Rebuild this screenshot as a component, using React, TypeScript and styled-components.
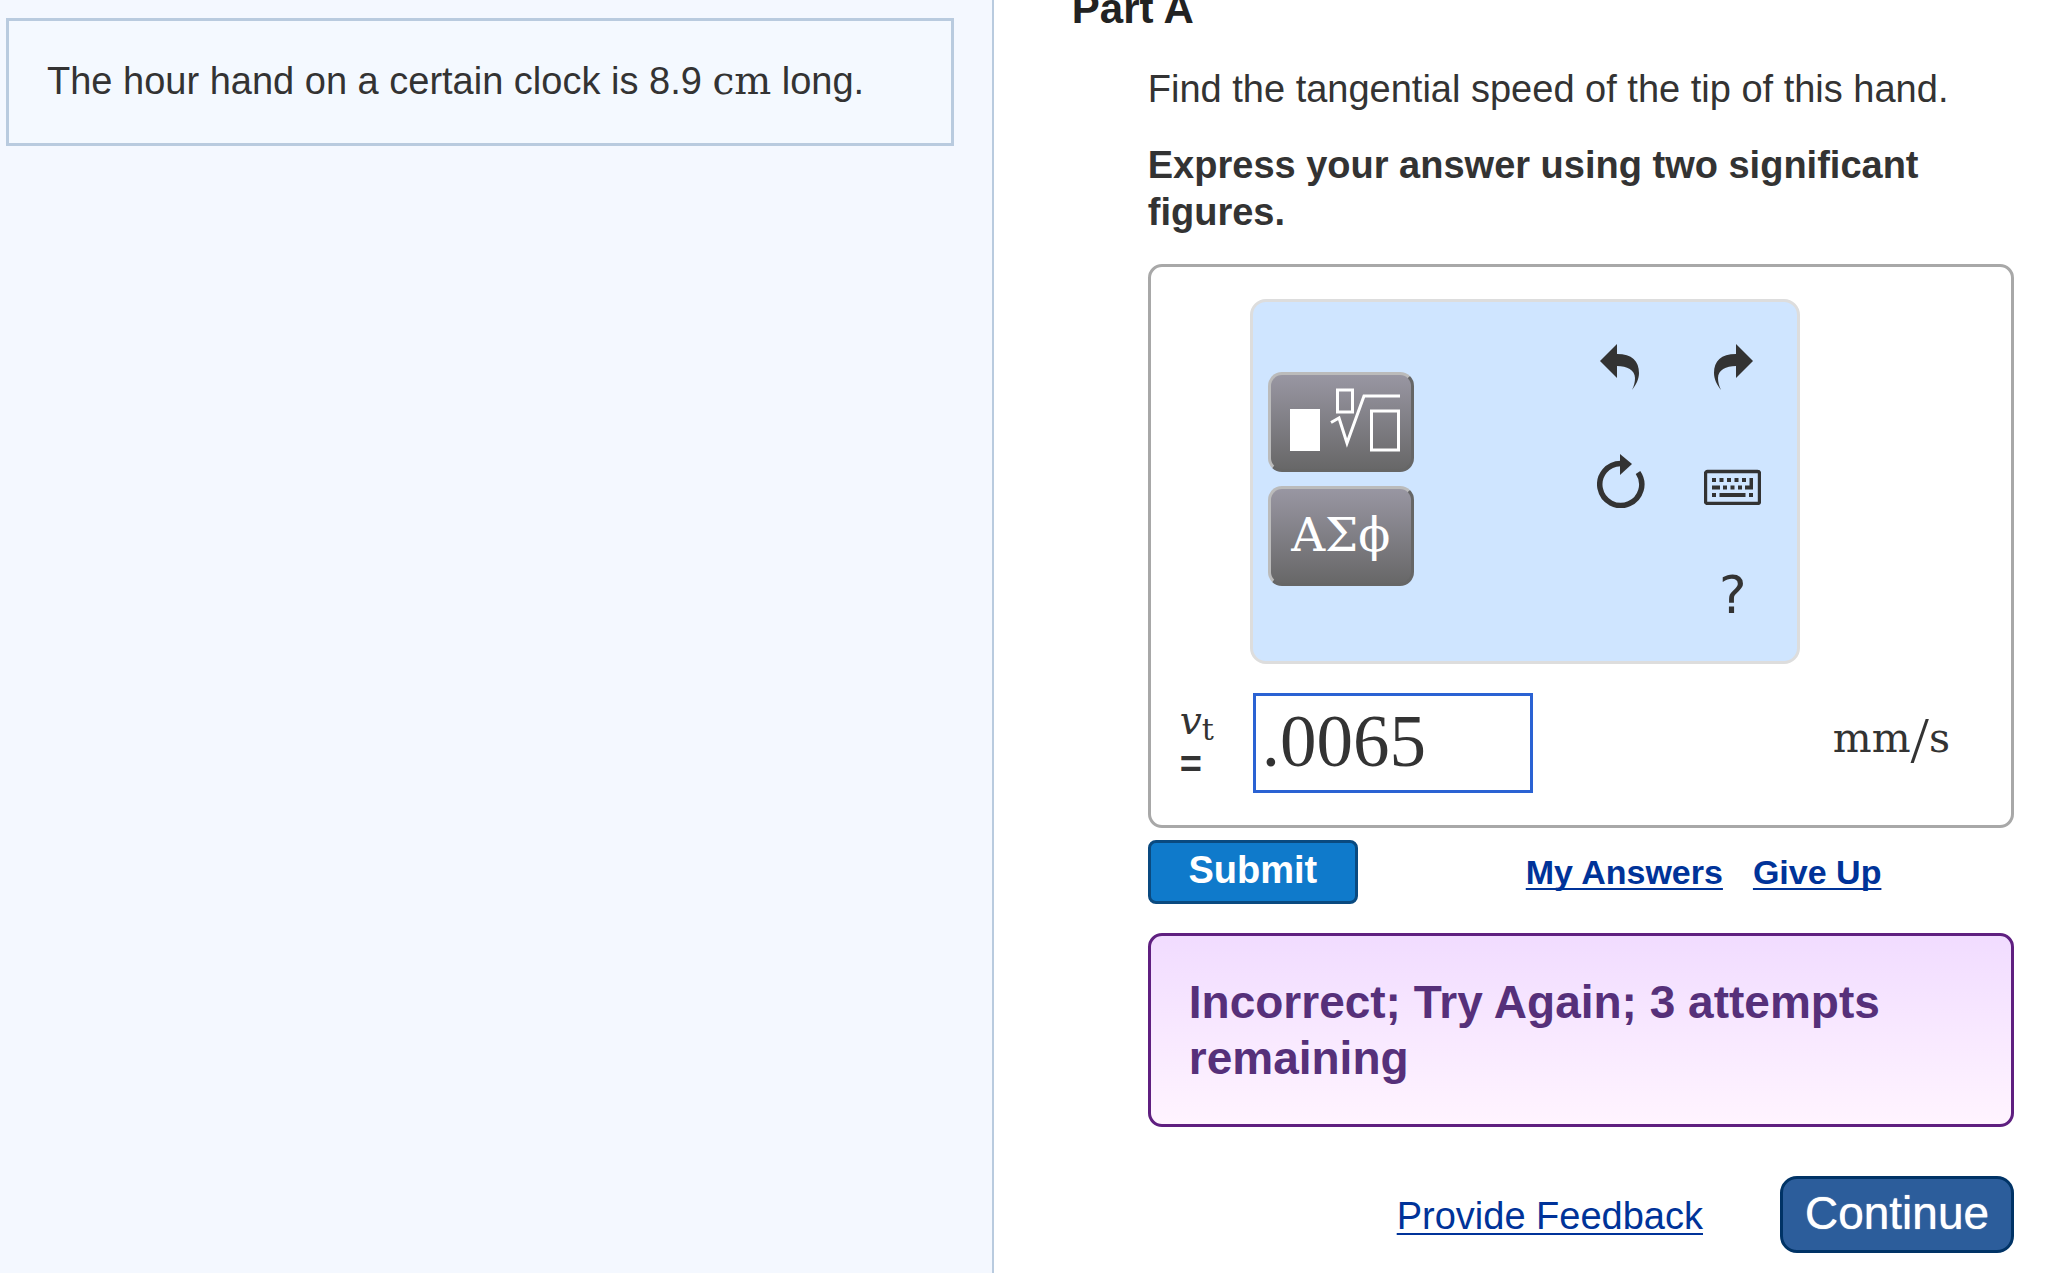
import React from "react";
import styled, { createGlobalStyle } from "styled-components";

const sans = `"Liberation Sans", Arial, Helvetica, sans-serif`;
const serif = `"Liberation Serif", "Times New Roman", serif`;
const mathSerif = `"DejaVu Serif", "Liberation Serif", serif`;

const GlobalStyle = createGlobalStyle`
  *, *::before, *::after { box-sizing: border-box; }
  body {
    margin: 0;
    background: #fff;
    color: #333;
    font: 38px/47px ${sans};
  }
`;

const Page = styled.main`
  display: grid;
  grid-template-columns: minmax(0, 17fr) minmax(0, 18fr);
  min-height: 100vh;
  overflow: hidden;
`;

const ProblemPane = styled.section`
  padding: 18px 38px 18px 6px;
  background: #f4f8ff;
  border-right: 2px solid #b9cbdf;
`;

const ProblemBox = styled.div`
  padding: 37px 38px 38px;
  background: #f4f9ff;
  border: 3px solid #b9cbdf;
`;

const MathText = styled.span`
  font-family: ${mathSerif};
  font-size: 39px;
  line-height: 0;
`;

const WorkPane = styled.section`
  padding: 0 32px 16px 78px;
`;

const PartHeading = styled.h2`
  margin: -15px 0 34px;
  font-size: 42px;
  line-height: 47px;
  color: #222;
`;

const PartBody = styled.div`
  padding-left: 76px;
`;

const Prompt = styled.p<{ $strong?: boolean }>`
  margin: 0 0 ${(p) => (p.$strong ? 28 : 29)}px;
  font-weight: ${(p) => (p.$strong ? 700 : 400)};
`;

const AnswerBox = styled.div`
  padding: 32px 61px 32px 29px;
  border: 3px solid #a8a8a8;
  border-radius: 14px;
`;

const Toolbar = styled.div`
  display: flex;
  justify-content: space-between;
  max-width: 550px;
  margin: 0 0 29px 70px;
  padding: 8px 8px 9px 15px;
  background: #cfe5ff;
  border: 3px solid #ddd;
  border-radius: 16px;
`;

const Palettes = styled.div`
  display: flex;
  flex-direction: column;
  gap: 14px;
  padding-top: 62px;
`;

const PaletteButton = styled.button`
  display: flex;
  align-items: center;
  justify-content: center;
  width: 146px;
  height: 100px;
  padding: 0 0 2px;
  color: #fff;
  font: 47px/92px ${mathSerif};
  background: linear-gradient(#9a98a4, #666) border-box;
  border: 3px solid;
  border-color: #bbb #666 #666 #bbb;
  border-radius: 14px;
`;

const Tools = styled.div`
  display: grid;
  grid-template-columns: repeat(2, 112px);
  grid-auto-rows: 114px;
`;

const ToolButton = styled.button<{ $column?: number }>`
  display: flex;
  align-items: center;
  justify-content: center;
  grid-column: ${(p) => p.$column ?? "auto"};
  padding: 0;
  color: #333;
  font: 52px/1 "DejaVu Sans", ${sans};
  background: none;
  border: 0;
`;

const AnswerRow = styled.div`
  display: flex;
  align-items: center;
`;

const AnswerLabel = styled.label`
  width: 73px;
  font-weight: 700;
  line-height: 43px;
`;

const LabelLine = styled.span`
  display: block;
  height: 43px;
`;

const Variable = styled(MathText)`
  font-style: italic;
  font-weight: 400;
`;

const Subscript = styled.sub`
  font: 30px/0 ${mathSerif};
  vertical-align: -6px;
`;

const AnswerInput = styled.input`
  width: 280px;
  height: 100px;
  padding: 0 6px 2px;
  color: #333;
  font: 73px/82px ${serif};
  background: #fff;
  border: 3px solid #2a62d3;
  border-radius: 0;
  outline: 0;
`;

const Unit = styled(MathText)`
  margin-left: auto;
  padding-bottom: 10px;
  font-size: 41px;
  line-height: 48px;
`;

const UnitSlash = styled.span`
  font: 66px/0 ${serif};
  vertical-align: -10px;
`;

const Actions = styled.div`
  display: flex;
  align-items: center;
  gap: 30px;
  margin: 12px 0 29px;
`;

const SubmitButton = styled.button`
  width: 210px;
  height: 64px;
  margin-right: 138px;
  padding: 0 0 4px;
  color: #fff;
  font: 700 38px/47px ${sans};
  background: #0f7acb;
  border: 3px solid #0a4a80;
  border-radius: 8px;
`;

const Link = styled.a<{ $bold?: boolean }>`
  color: #039;
  font-size: ${(p) => (p.$bold ? 34 : 38)}px;
  font-weight: ${(p) => (p.$bold ? 700 : 400)};
  text-decoration-thickness: 2px;
  text-underline-offset: 4px;
  text-decoration-skip-ink: none;
`;

const Feedback = styled.div`
  padding: 38px;
  color: #56307a;
  font-size: 46px;
  font-weight: 700;
  line-height: 56px;
  background: linear-gradient(#f1dcff, #fff4ff);
  border: 3px solid #5f1f80;
  border-radius: 14px;
`;

const Footer = styled.div`
  display: flex;
  align-items: center;
  justify-content: flex-end;
  gap: 77px;
  margin-top: 49px;

  & > a {
    padding-top: 3px;
  }
`;

const ContinueButton = styled.button`
  width: 234px;
  height: 77px;
  padding: 0 0 4px;
  color: #fff;
  font: 46px/56px ${sans};
  text-shadow: 0 0 1px #fff;
  background: #2c5d9b;
  border: 3px solid #036;
  border-radius: 17px;
`;

const TemplateIcon = () => (
  <svg width="140" height="94" viewBox="3 3 140 94" fill="none" stroke="#fff" strokeWidth="3" aria-hidden="true">
    <rect x="22" y="38" width="30" height="42" fill="#fff" stroke="none" />
    <rect x="69.500" y="19" width="15" height="22" />
    <path d="M63 51.500l8-4.500 8 25 17-47h36" />
    <rect x="103.500" y="40" width="27" height="39" />
  </svg>
);

const arrowPath = "M17 0v10c15 0 22 7 22 19 0 6-3 12-7 17 2-4 3-8 3-12 0-8-8-12-18-12v12L0 17z";

const UndoIcon = () => (
  <svg width="42" height="46" viewBox="0 0 42 46" fill="currentColor" aria-hidden="true">
    <path d={arrowPath} />
  </svg>
);

const RedoIcon = () => (
  <svg width="40" height="46" viewBox="0 0 40 46" fill="currentColor" aria-hidden="true">
    <path d={arrowPath} transform="matrix(-1 0 0 1 40 0)" />
  </svg>
);

const ResetIcon = () => (
  <svg width="48" height="54" viewBox="0 0 48 54" aria-hidden="true">
    <path d="M24 9.500A21 21 0 1 0 41 18.500" fill="none" stroke="currentColor" strokeWidth="5.500" />
    <path d="M23 0l12 10-12 11z" fill="currentColor" />
  </svg>
);

const KeyboardIcon = () => (
  <svg width="57" height="47" viewBox="0 -12 57 47" fill="currentColor" aria-hidden="true">
    <rect x="1.500" y="1.500" width="54" height="32" rx="2" fill="none" stroke="currentColor" strokeWidth="3.400" />
    <path d="M8 8h4v4H8zM15.500 8h4v4h-4zM23 8h4v4h-4zM30.500 8h4v4h-4zM38 8h4v4h-4z" />
    <path d="M8 15.500h8v4H8zM19 15.500h4v4h-4zM26.500 15.500h4v4h-4zM34 15.500h4v4h-4z" />
    <path d="M45.500 8h3.500v11.500h-8v-4h4.500z" />
    <path d="M8 23h4v4H8zM15.500 23h26v4h-26zM45 23h4v4h-4z" />
  </svg>
);

export default function App() {
  return (
    <>
      <GlobalStyle />
      <Page>
        <ProblemPane>
          <ProblemBox>
            The hour hand on a certain clock is 8.9 <MathText>cm</MathText> long.
          </ProblemBox>
        </ProblemPane>
        <WorkPane>
          <PartHeading>Part A</PartHeading>
          <PartBody>
            <Prompt>Find the tangential speed of the tip of this hand.</Prompt>
            <Prompt $strong>Express your answer using two significant figures.</Prompt>
            <AnswerBox>
              <Toolbar role="toolbar">
                <Palettes>
                  <PaletteButton type="button">
                    <TemplateIcon />
                  </PaletteButton>
                  <PaletteButton type="button">ΑΣϕ</PaletteButton>
                </Palettes>
                <Tools>
                  <ToolButton type="button"><UndoIcon /></ToolButton>
                  <ToolButton type="button"><RedoIcon /></ToolButton>
                  <ToolButton type="button"><ResetIcon /></ToolButton>
                  <ToolButton type="button"><KeyboardIcon /></ToolButton>
                  <ToolButton type="button" $column={2}>?</ToolButton>
                </Tools>
              </Toolbar>
              <AnswerRow>
                <AnswerLabel htmlFor="answer">
                  <LabelLine>
                    <Variable>v<Subscript>t</Subscript></Variable>
                  </LabelLine>
                  <LabelLine>=</LabelLine>
                </AnswerLabel>
                <AnswerInput id="answer" type="text" defaultValue=".0065" />
                <Unit>
                  mm<UnitSlash>/</UnitSlash>s
                </Unit>
              </AnswerRow>
            </AnswerBox>
            <Actions>
              <SubmitButton type="button">Submit</SubmitButton>
              <Link href="#answers" $bold>My Answers</Link>
              <Link href="#give-up" $bold>Give Up</Link>
            </Actions>
            <Feedback role="status">Incorrect; Try Again; 3 attempts remaining</Feedback>
            <Footer>
              <Link href="#feedback">Provide Feedback</Link>
              <ContinueButton type="button">Continue</ContinueButton>
            </Footer>
          </PartBody>
        </WorkPane>
      </Page>
    </>
  );
}
